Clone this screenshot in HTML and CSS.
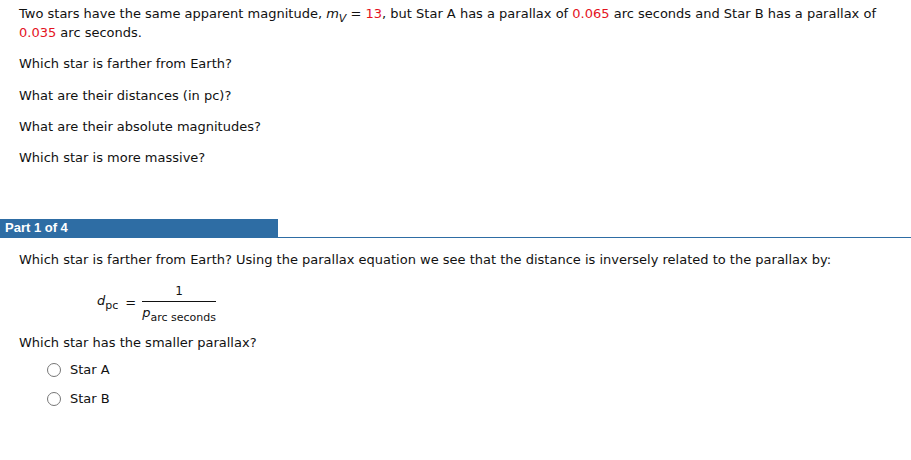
FILE: index.html
```html
<!DOCTYPE html>
<html>
  <head>
    <meta charset="utf-8" />
    <title>Part 1 of 4</title>
    <link rel="stylesheet" href="styles.css">
  </head>
  <body>
    <div class="question">
      <p>
        Two stars have the same apparent magnitude,
        <i class="var">m</i><sub class="var">V</sub> = <span class="num">13</span>,
        but Star A has a parallax of <span class="num">0.065</span> arc seconds
        and Star B has a parallax of <span class="num">0.035</span> arc seconds.
      </p>
      <p>Which star is farther from Earth?</p>
      <p>What are their distances (in pc)?</p>
      <p>What are their absolute magnitudes?</p>
      <p>Which star is more massive?</p>
    </div>

    <div class="part-head">
      <div class="part-title">Part 1 of 4</div>
    </div>

    <div class="part-body">
      <p>
        Which star is farther from Earth? Using the parallax equation we see
        that the distance is inversely related to the parallax by:
      </p>
      <div class="formula">
        <span class="lhs"><i>d</i><sub>pc</sub></span>
        <span class="eq">=</span>
        <span class="frac">
          <span class="numer">1</span>
          <span class="denom"><i>p</i><sub>arc seconds</sub></span>
        </span>
      </div>
      <p>Which star has the smaller parallax?</p>
      <ul class="choices">
        <li><label><input type="radio" name="star" /> Star A</label></li>
        <li><label><input type="radio" name="star" /> Star B</label></li>
      </ul>
    </div>
  </body>
</html>
```

FILE: styles.css
```css
body {
  margin: 0;
  font-family: "DejaVu Sans", Verdana, sans-serif;
  font-size: 13px;
  color: #111;
  background: #fff;
}
p {
  margin: 0 0 12.3px;
  line-height: 19px;
}
.question {
  padding: 4px 19px 0;
  min-height: 202px;
}
.num {
  color: #e4131e;
}
.var {
  font-style: italic;
}
sub {
  font-size: 11px;
  vertical-align: -4px;
  line-height: 0;
}
.part-head {
  border-bottom: 1px solid #2e6da4;
  margin-top: 13px;
}
.part-title {
  background: #2e6da4;
  color: #fff;
  font-family: "Liberation Sans", Arial, sans-serif;
  font-weight: bold;
  font-size: 13px;
  width: 267px;
  padding: 2px 6px 2px 5px;
  line-height: 14px;
}
.part-body {
  padding: 12px 19px 0;
}
.formula {
  display: flex;
  align-items: center;
  padding-left: 78px;
  margin: 15px 0 13px;
  font-size: 13px;
}
.formula i {
  font-style: italic;
}
.lhs {
  margin-bottom: 4px;
}
.eq {
  margin: 0 6px 0 7px;
}
.frac {
  display: inline-flex;
  flex-direction: column;
  align-items: center;
}
.numer {
  border-bottom: 1px solid #111;
  width: 100%;
  text-align: center;
  font-size: 12px;
  padding-bottom: 3px;
}
.denom {
  padding-top: 3px;
}
.choices {
  list-style: none;
  margin: -2px 0 0;
  padding: 0 0 0 28px;
}
.choices li {
  height: 29px;
}
.choices label {
  display: inline-flex;
  align-items: center;
  gap: 9px;
}
.choices input {
  margin: 0;
  width: 14px;
  height: 14px;
}
```
